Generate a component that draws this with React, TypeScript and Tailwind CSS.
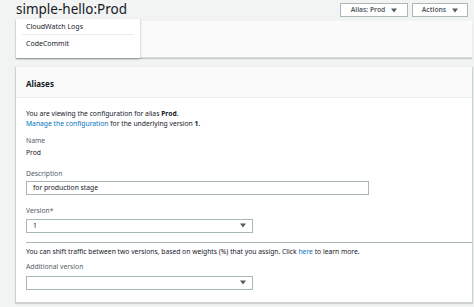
import React from 'react';

const font = { fontFamily: '"Noto Sans", "Open Sans", Arial, sans-serif' };

const Caret = () => (
  <svg width="6" height="5" viewBox="0 0 6 5" className="inline-block">
    <path d="M0 0.5 L6 0.5 L3 4.5 Z" fill="#545b64" />
  </svg>
);

const SelectBox: React.FC<{ value?: string }> = ({ value }) => (
  <div className="w-[227px] h-[14px] border border-[#aab7b8] bg-white flex items-center justify-between pl-[6px] pr-[6px] text-[6.75px] text-[#16191f]">
    <span>{value}</span>
    <Caret />
  </div>
);

const App: React.FC = () => {
  return (
    <div className="w-[474px] h-[307px] bg-[#f2f3f3] pl-[16px] pr-[2px] overflow-hidden" style={font}>
      {/* header */}
      <div className="h-[21px] flex items-start justify-between">
        <h1 className="text-[13.5px] leading-[20px] text-[#16191f] -mt-[1px]">simple-hello:Prod</h1>
        <div className="flex gap-[4px] mt-[3px] mr-[4px]">
          <button className="w-[68px] h-[14px] border border-[#aab7b8] bg-white text-[6.75px] font-semibold text-[#545b64] flex items-center justify-center gap-[6px]">
            Alias: Prod <Caret />
          </button>
          <button className="w-[56px] h-[14px] border border-[#aab7b8] bg-white text-[6.75px] font-semibold text-[#545b64] flex items-center justify-center gap-[6px]">
            Actions <Caret />
          </button>
        </div>
      </div>

      {/* panel behind menu */}
      <div className="relative h-[37px] bg-[#fafafa] border-b border-[#d5dbdb] shadow-[0_1px_1px_rgba(0,28,36,0.2)]">
        <div className="absolute left-0 -top-[2px] w-[124px] h-[39px] bg-white shadow-[0_1px_2px_rgba(0,28,36,0.35)] px-[6px] text-[7px] text-[#16191f]">
          <div className="h-[16px] flex items-end pl-[4px] pb-[2px] border-b border-[#eaeded]">CloudWatch Logs</div>
          <div className="h-[18px] flex items-center pl-[4px]">CodeCommit</div>
        </div>
      </div>

      {/* Aliases panel */}
      <div className="mt-[9px] h-[235px] bg-white shadow-[0_1px_1px_1px_rgba(0,28,36,0.15)]">
        <div className="h-[31px] bg-[#fafafa] border-b border-[#eaeded] flex items-center pl-[10px] pt-[3px]">
          <span className="text-[8px] font-bold text-[#16191f]">Aliases</span>
        </div>
        <div className="pl-[10px] text-[6.75px] leading-[9.5px] text-[#16191f]">
          <div className="pt-[11px]">
            <div>
              You are viewing the configuration for alias <span className="font-bold">Prod</span>.
            </div>
            <div>
              <span className="text-[#0073bb]">Manage the configuration</span> for the underlying version <span className="font-bold">1</span>.
            </div>
          </div>
          <div className="mt-[7.5px] text-[#545b64]">Name</div>
          <div className="mt-[2.5px]">Prod</div>
          <div className="mt-[11.5px] text-[#545b64]">Description</div>
          <div className="mt-[3px] w-[343px] h-[14px] border border-[#aab7b8] flex items-center pl-[6px]">for production stage</div>
          <div className="mt-[11px] text-[#545b64]">Version*</div>
          <div className="mt-[3px]">
            <SelectBox value="1" />
          </div>
          <div className="mt-[9.5px] border-t border-[#aab7b8] pt-[4px]">
            <div>
              You can shift traffic between two versions, based on weights (%) that you assign. Click <span className="text-[#0073bb]">here</span> to learn more.
            </div>
            <div className="mt-[5.5px] text-[#545b64]">Additional version</div>
            <div className="mt-[4px]">
              <SelectBox />
            </div>
          </div>
        </div>
      </div>
    </div>
  );
};

export default App;
